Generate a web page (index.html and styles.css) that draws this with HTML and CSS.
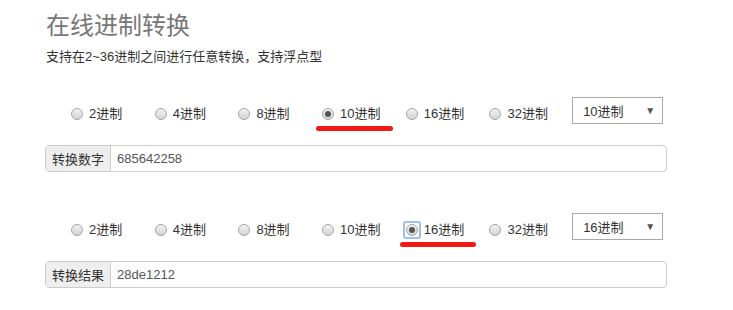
FILE: index.html
```html
<!DOCTYPE html>
<html lang="zh-CN">
<head>
<meta charset="utf-8">
<title>在线进制转换</title>
<link rel="stylesheet" href="styles.css">
</head>
<body>
<div class="page">
  <h1 class="title">在线进制转换</h1>
  <p class="desc">支持在2~36进制之间进行任意转换，支持浮点型</p>

  <div class="radio-row row-first">
    <div class="opt"><span class="inner"><span class="dot"></span><span class="lbl">2进制</span></span></div>
    <div class="opt"><span class="inner"><span class="dot"></span><span class="lbl">4进制</span></span></div>
    <div class="opt"><span class="inner"><span class="dot"></span><span class="lbl">8进制</span></span></div>
    <div class="opt"><span class="inner marked"><span class="dot checked"></span><span class="lbl">10进制</span></span></div>
    <div class="opt"><span class="inner"><span class="dot"></span><span class="lbl">16进制</span></span></div>
    <div class="opt"><span class="inner"><span class="dot"></span><span class="lbl">32进制</span></span></div>
    <div class="sel"><span class="sel-text">10进制</span><span class="arrow">▼</span></div>
  </div>

  <div class="group group-first">
    <span class="addon">转换数字</span>
    <span class="field">685642258</span>
  </div>

  <div class="radio-row row-second">
    <div class="opt"><span class="inner"><span class="dot"></span><span class="lbl">2进制</span></span></div>
    <div class="opt"><span class="inner"><span class="dot"></span><span class="lbl">4进制</span></span></div>
    <div class="opt"><span class="inner"><span class="dot"></span><span class="lbl">8进制</span></span></div>
    <div class="opt"><span class="inner"><span class="dot"></span><span class="lbl">10进制</span></span></div>
    <div class="opt"><span class="inner marked"><span class="dot checked focused"></span><span class="lbl">16进制</span></span></div>
    <div class="opt"><span class="inner"><span class="dot"></span><span class="lbl">32进制</span></span></div>
    <div class="sel"><span class="sel-text">16进制</span><span class="arrow">▼</span></div>
  </div>

  <div class="group group-second">
    <span class="addon">转换结果</span>
    <span class="field">28de1212</span>
  </div>
</div>
</body>
</html>
```

FILE: styles.css
```css
html, body {
  margin: 0;
  padding: 0;
  background: #fff;
}
body {
  font-family: "Liberation Sans", "Noto Sans CJK SC", sans-serif;
  font-size: 13px;
  color: #333;
}
.page {
  padding-left: 45px;
  width: 623px;
}
.title {
  margin: 10px 0 0 1px;
  font-size: 24px;
  line-height: 32px;
  font-weight: normal;
  color: #777;
}
.desc {
  margin: 6px 0 0 1px;
  font-size: 13px;
  line-height: 18px;
  color: #333;
}
.radio-row {
  display: flex;
  align-items: center;
  padding-left: 26px;
  height: 27px;
}
.row-first { margin-top: 31px; }
.row-second { margin-top: 41px; }
.opt {
  width: 83.7px;
  flex: none;
  padding-top: 6px;
}
.inner {
  position: relative;
  display: inline-flex;
  align-items: center;
  height: 18px;
}
.marked::after {
  content: "";
  position: absolute;
  left: -6px;
  right: -12px;
  top: 21px;
  height: 5px;
  border-radius: 3px;
  background: #f41a14;
}
.dot {
  box-sizing: border-box;
  width: 12px;
  height: 12px;
  border-radius: 50%;
  border: 1px solid #a6a6a6;
  background: linear-gradient(#f2f2f2, #d4d4d4);
  position: relative;
  flex: none;
}
.dot.checked::before {
  content: "";
  position: absolute;
  left: 2px;
  top: 2px;
  width: 6px;
  height: 6px;
  border-radius: 50%;
  background: #555;
}
.dot.focused::after {
  content: "";
  position: absolute;
  left: -4px;
  top: -4px;
  width: 14px;
  height: 14px;
  border: 2px solid #9dbff2;
  border-radius: 3px;
}
.lbl {
  margin-left: 6px;
  line-height: 18px;
  color: #333;
}
.sel {
  box-sizing: border-box;
  flex: none;
  width: 91px;
  height: 27px;
  margin-left: -1px;
  border: 1px solid #aaa;
  display: flex;
  align-items: center;
  justify-content: space-between;
  padding: 0 7px 0 10px;
  color: #333;
}
.arrow {
  font-size: 10px;
  color: #555;
}
.group {
  box-sizing: border-box;
  display: flex;
  width: 622px;
  height: 27px;
  border: 1px solid #ccc;
  border-radius: 4px;
  overflow: hidden;
}
.group-first { margin-top: 21px; }
.group-second { margin-top: 21px; }
.addon {
  display: flex;
  align-items: center;
  padding: 0 6px;
  background: #eee;
  border-right: 1px solid #ccc;
  color: #333;
}
.field {
  display: flex;
  align-items: center;
  padding-left: 6px;
  color: #555;
}
```
